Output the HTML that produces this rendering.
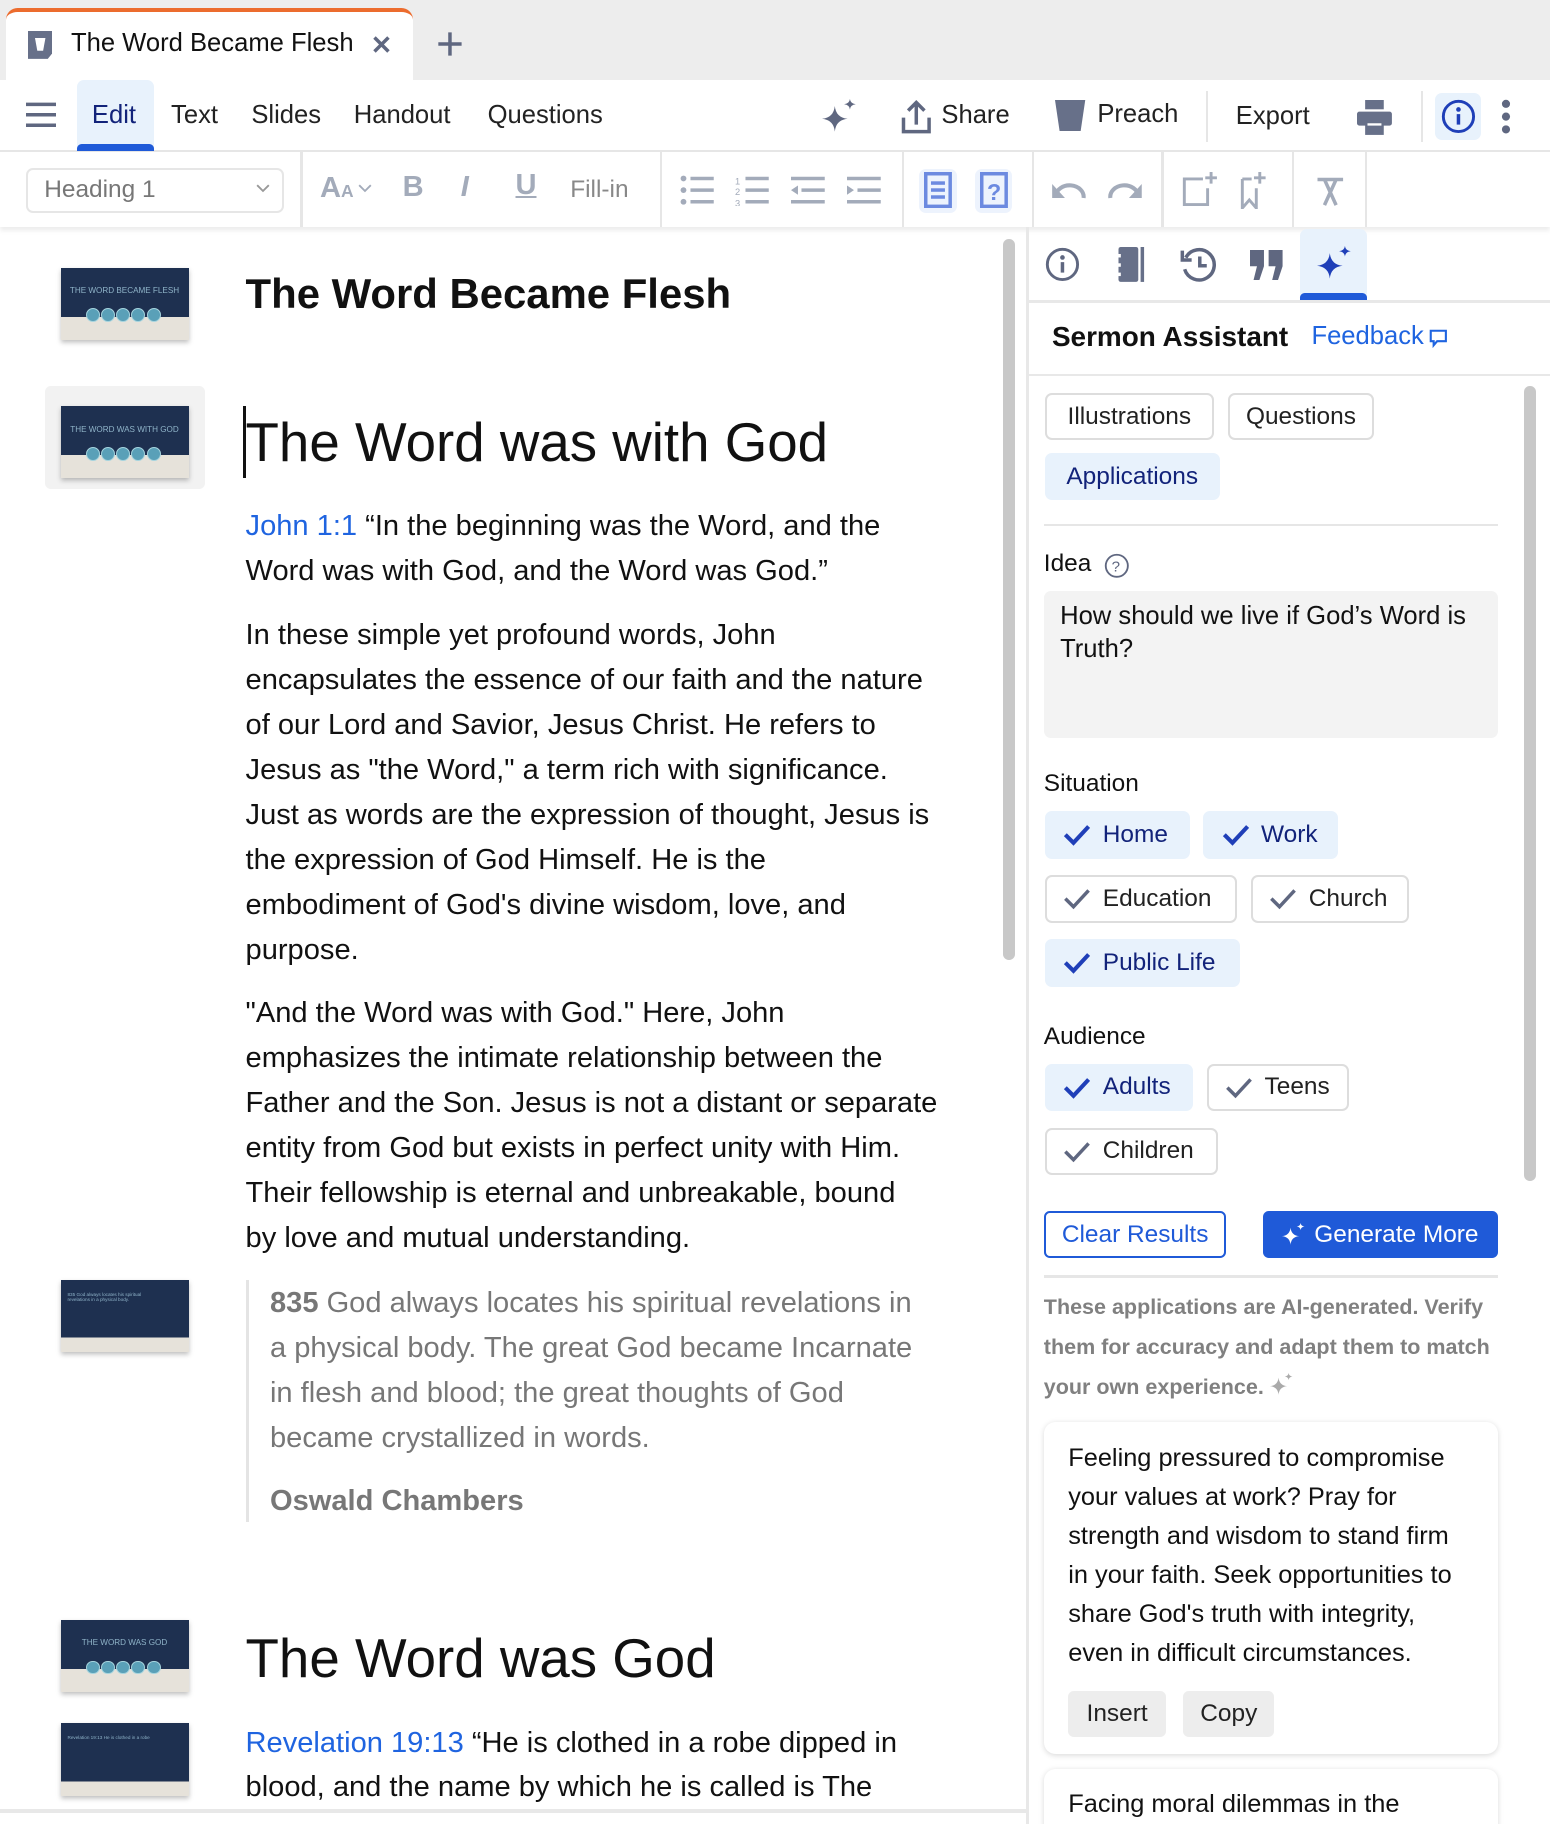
<!DOCTYPE html>
<html><head><meta charset="utf-8"><style>
*{box-sizing:border-box;margin:0;padding:0}
html,body{width:1550px;height:1824px;overflow:hidden;background:#fff}
#root{zoom:1.16366;width:1332px;height:1568px;position:relative;font-family:"Liberation Sans",sans-serif;color:#111;overflow:hidden}
.a{position:absolute;white-space:nowrap}
.ic{position:absolute}
.chip{position:absolute;border:2px solid #ddd;border-radius:6px;font-size:21px;color:#222;display:flex;align-items:center;justify-content:center;background:#fff}
.chip.on{background:#e8f2fc;border-color:#e8f2fc;color:#12237a}
.chk{position:absolute;border:2px solid #ddd;border-radius:6px;font-size:21px;color:#222;display:flex;align-items:center;padding-left:14px;gap:10px;background:#fff}
.chk.on{background:#e8f2fc;border-color:#e8f2fc;color:#12237a}
.chk svg{width:24px;height:20px}
.sep{position:absolute;width:2px;background:#e6e6e6}
.p{position:absolute;left:211px;font-size:25px;line-height:38.6px;white-space:nowrap;color:#111}
.thumb{position:absolute;width:110px;height:62px;background:linear-gradient(#1e3050 0 68%,#e6e2da 68%);box-shadow:0 2px 4px rgba(0,0,0,.25)}
.thumb span{position:absolute;left:0;right:0;top:16px;text-align:center;font-size:7px;color:#8fb3c8}
.thumb i{position:absolute;top:35px;width:12px;height:12px;border-radius:50%;background:#5aa0b8;border:1px solid #a6d4de}
</style></head><body><div id="root">
<div class="a" style="left:0;top:0;width:1332px;height:69px;background:#ededed"></div>
<div class="a" style="left:5px;top:7px;width:350px;height:63px;background:#fff;border-radius:10px 10px 0 0;border-top:4px solid #ec6c2e"></div>
<svg class="ic" style="left:24px;top:27px" width="21" height="24" viewBox="0 0 21 24"><path d="M0 0H21V19L17 24H0Z" fill="#677089"/><path d="M6 6H15L13 17H8Z" fill="#fff"/></svg>
<div class="a" style="left:61px;top:25px;font-size:22px;color:#111">The Word Became Flesh</div>
<svg class="ic" style="left:319px;top:29px" width="18" height="18"><path d="M3 3L15 15M15 3L3 15" stroke="#5f6780" stroke-width="3"/></svg>
<svg class="ic" style="left:375px;top:26px" width="24" height="24"><path d="M12 2V22M2 12H22" stroke="#5f6780" stroke-width="3"/></svg>
<div class="a" style="left:0;top:69px;width:1332px;height:62px;background:#fff;border-bottom:2px solid #e6e6e6"></div>
<svg class="ic" style="left:22px;top:88px" width="26" height="22"><path d="M0 2H26M0 11H26M0 20H26" stroke="#5f6780" stroke-width="3"/></svg>
<div class="a" style="left:66px;top:69px;width:66px;height:61px;background:#e8f2fc;border-radius:6px 6px 0 0"></div>
<div class="a" style="left:66px;top:124px;width:66px;height:6px;background:#1f5ad8;border-radius:4px 4px 0 0"></div>
<div class="a" style="left:79px;top:87px;font-size:22px;color:#12237a">Edit</div>
<div class="a" style="left:147px;top:87px;font-size:22px;color:#222">Text</div>
<div class="a" style="left:216px;top:87px;font-size:22px;color:#222">Slides</div>
<div class="a" style="left:304px;top:87px;font-size:22px;color:#222">Handout</div>
<div class="a" style="left:419px;top:87px;font-size:22px;color:#222">Questions</div>
<svg class="ic" style="left:706px;top:85px" width="30" height="30" viewBox="0 0 30 30"><path d="M11 6Q12 16 22 17Q12 18 11 28Q10 18 0 17Q10 16 11 6Z" fill="#5f6780"/><path d="M24 0Q24.5 4 29 4.5Q24.5 5 24 9Q23.5 5 19 4.5Q23.5 4 24 0Z" fill="#5f6780"/></svg>
<svg class="ic" style="left:773px;top:85px" width="28" height="30"><path d="M14 22V3M7 10L14 3L21 10M3 16V28H25V16" stroke="#5f6780" stroke-width="3" fill="none"/></svg>
<div class="a" style="left:809px;top:87px;font-size:22px;color:#222">Share</div>
<svg class="ic" style="left:907px;top:86px" width="26" height="27"><path d="M0 0H26L22 27H4Z" fill="#677089"/></svg>
<div class="a" style="left:943px;top:86px;font-size:22px;color:#222">Preach</div>
<div class="sep" style="left:1036px;top:78px;height:44px"></div>
<div class="a" style="left:1062px;top:88px;font-size:22px;color:#222">Export</div>
<svg class="ic" style="left:1166px;top:86px" width="30" height="30"><rect x="7" y="0" width="16" height="8" fill="#677089"/><rect x="0" y="10" width="30" height="12" rx="2" fill="#677089"/><rect x="7" y="19" width="16" height="11" fill="#677089"/><rect x="9" y="20" width="12" height="2" fill="#fff"/></svg>
<div class="sep" style="left:1221px;top:78px;height:44px"></div>
<div class="a" style="left:1233px;top:80px;width:40px;height:40px;background:#e8f2fc;border-radius:6px"></div>
<svg class="ic" style="left:1238px;top:85px" width="30" height="30"><circle cx="15" cy="15" r="13" stroke="#1f3fb8" stroke-width="2.5" fill="none"/><circle cx="15" cy="9" r="2" fill="#1f3fb8"/><path d="M15 13V22" stroke="#1f3fb8" stroke-width="3"/></svg>
<svg class="ic" style="left:1288px;top:84px" width="12" height="32"><circle cx="6" cy="5" r="3.5" fill="#5f6780"/><circle cx="6" cy="16" r="3.5" fill="#5f6780"/><circle cx="6" cy="27" r="3.5" fill="#5f6780"/></svg>
<div class="a" style="left:0;top:131px;width:1332px;height:64px;background:#fff;box-shadow:0 3px 4px rgba(0,0,0,.08)"></div>
<div class="a" style="left:22px;top:144px;width:222px;height:39px;border:2px solid #e6e6e6;border-radius:6px"></div>
<div class="a" style="left:38px;top:151px;font-size:21px;color:#777">Heading 1</div>
<svg class="ic" style="left:220px;top:158px" width="12" height="8"><path d="M1 1L6 6L11 1" stroke="#999" stroke-width="1.6" fill="none"/></svg>
<div class="sep" style="left:258px;top:131px;height:64px"></div>
<div class="sep" style="left:567px;top:131px;height:64px"></div>
<div class="sep" style="left:775px;top:131px;height:64px"></div>
<div class="sep" style="left:887px;top:131px;height:64px"></div>
<div class="sep" style="left:998px;top:131px;height:64px"></div>
<div class="sep" style="left:1110px;top:131px;height:64px"></div>
<div class="sep" style="left:1173px;top:131px;height:64px"></div>
<div class="a" style="left:275px;top:148px;font-size:25px;font-weight:bold;color:#a3abba">A<span style="font-size:15px">A</span></div>
<svg class="ic" style="left:308px;top:158px" width="12" height="8"><path d="M1 1L6 6L11 1" stroke="#a3abba" stroke-width="1.6" fill="none"/></svg>
<div class="a" style="left:346px;top:147px;font-size:25px;font-weight:bold;color:#a3abba">B</div>
<div class="a" style="left:396px;top:147px;font-size:25px;font-weight:bold;font-style:italic;color:#a3abba">I</div>
<div class="a" style="left:443px;top:145px;font-size:25px;font-weight:bold;color:#a3abba;text-decoration:underline">U</div>
<div class="a" style="left:490px;top:151px;font-size:21px;color:#888">Fill-in</div>
<svg class="ic" style="left:584px;top:150px" width="30" height="27"><g fill="#a3abba"><circle cx="3" cy="3" r="2.5"/><circle cx="3" cy="13" r="2.5"/><circle cx="3" cy="23" r="2.5"/><rect x="9" y="1.5" width="20" height="3"/><rect x="9" y="11.5" width="20" height="3"/><rect x="9" y="21.5" width="20" height="3"/></g></svg>
<svg class="ic" style="left:632px;top:150px" width="30" height="27"><g fill="#a3abba"><rect x="9" y="1.5" width="20" height="3"/><rect x="9" y="11.5" width="20" height="3"/><rect x="9" y="21.5" width="20" height="3"/><text x="0" y="8" font-size="8">1</text><text x="0" y="17" font-size="8">2</text><text x="0" y="27" font-size="8">3</text></g></svg>
<svg class="ic" style="left:680px;top:150px" width="30" height="27"><g fill="#a3abba"><rect x="0" y="1.5" width="29" height="3"/><rect x="9" y="11.5" width="20" height="3"/><rect x="0" y="21.5" width="29" height="3"/><path d="M0 13L6 9V17Z"/></g></svg>
<svg class="ic" style="left:728px;top:150px" width="30" height="27"><g fill="#a3abba"><rect x="0" y="1.5" width="29" height="3"/><rect x="9" y="11.5" width="20" height="3"/><rect x="0" y="21.5" width="29" height="3"/><path d="M6 13L0 9V17Z"/></g></svg>
<div class="a" style="left:790px;top:145px;width:32px;height:38px;background:#edf3fd;border-radius:6px"></div>
<svg class="ic" style="left:794px;top:148px" width="24" height="31"><rect x="1.5" y="1.5" width="21" height="28" stroke="#6c8ae0" stroke-width="3" fill="none"/><g fill="#6c8ae0"><rect x="6" y="8" width="12" height="3"/><rect x="6" y="14" width="12" height="3"/><rect x="6" y="20" width="12" height="3"/></g></svg>
<div class="a" style="left:838px;top:145px;width:32px;height:38px;background:#edf3fd;border-radius:6px"></div>
<svg class="ic" style="left:842px;top:148px" width="24" height="31"><rect x="1.5" y="1.5" width="21" height="28" stroke="#6c8ae0" stroke-width="3" fill="none"/><text x="6" y="24" font-size="20" font-weight="bold" fill="#6c8ae0" font-family="Liberation Sans">?</text></svg>
<svg class="ic" style="left:903px;top:152px" width="30" height="22"><path d="M4 16A11 9 0 0 1 28 18" stroke="#a3abba" stroke-width="3.5" fill="none"/><path d="M1 6V18H12Z" fill="#a3abba"/></svg>
<svg class="ic" style="left:952px;top:152px" width="30" height="22"><path d="M26 16A11 9 0 0 0 2 18" stroke="#a3abba" stroke-width="3.5" fill="none"/><path d="M29 6V18H18Z" fill="#a3abba"/></svg>
<svg class="ic" style="left:1016px;top:148px" width="30" height="30"><path d="M18 6H2V28H22V14" stroke="#a3abba" stroke-width="2.5" fill="none"/><path d="M25 0V10M20 5H30" stroke="#a3abba" stroke-width="2.5"/></svg>
<svg class="ic" style="left:1066px;top:148px" width="30" height="32"><path d="M2 6V31L8 24L14 31V14" stroke="#a3abba" stroke-width="2.5" fill="none"/><path d="M17 0V10M12 5H22" stroke="#a3abba" stroke-width="2.5"/><path d="M2 6H10" stroke="#a3abba" stroke-width="2.5"/></svg>
<svg class="ic" style="left:1129px;top:151px" width="26" height="26"><path d="M3 3H25M9 3L19 25M19 3L9 25" stroke="#a3abba" stroke-width="3" fill="none"/></svg>
<div class="a" style="left:862px;top:205px;width:10px;height:620px;background:#c8c8c8;border-radius:5px"></div>
<div class="a" style="left:882px;top:195px;width:2px;height:1373px;background:#e8e8e8"></div>
<div class="a" style="left:0;top:1555px;width:882px;height:3px;background:#e8e8e8"></div>
<div class="thumb" style="left:52px;top:230px"><span>THE WORD BECAME FLESH</span><i style="left:22px"></i><i style="left:35px"></i><i style="left:48px"></i><i style="left:61px"></i><i style="left:74px"></i></div>
<div class="a" style="left:39px;top:332px;width:137px;height:88px;background:#f2f2f2;border-radius:5px"></div>
<div class="thumb" style="left:52px;top:349px"><span>THE WORD WAS WITH GOD</span><i style="left:22px"></i><i style="left:35px"></i><i style="left:48px"></i><i style="left:61px"></i><i style="left:74px"></i></div>
<div class="thumb" style="left:52px;top:1100px;background:linear-gradient(#1e3050 0 80%,#e6e2da 80%)"><span style="top:10px;font-size:4px;text-align:left;padding-left:6px">835 God always locates his spiritual<br>revelations in a physical body.</span></div>
<div class="thumb" style="left:52px;top:1392px"><span>THE WORD WAS GOD</span><i style="left:22px"></i><i style="left:35px"></i><i style="left:48px"></i><i style="left:61px"></i><i style="left:74px"></i></div>
<div class="thumb" style="left:52px;top:1481px;background:linear-gradient(#1e3050 0 80%,#e6e2da 80%)"><span style="top:10px;font-size:4px;text-align:left;padding-left:6px">Revelation 19:13 He is clothed in a robe</span></div>
<div class="a" style="left:211px;top:232px;font-size:36px;font-weight:bold;color:#111">The Word Became Flesh</div>
<div class="a" style="left:209px;top:349px;width:2px;height:62px;background:#111"></div>
<div class="a" style="left:211px;top:352px;font-size:47px;color:#111">The Word was with God</div>
<div class="p" style="top:433px"><span style="color:#1f64e0">John 1:1</span> “In the beginning was the Word, and the<br>Word was with God, and the Word was God.”</div>
<div class="p" style="top:527px">In these simple yet profound words, John<br>encapsulates the essence of our faith and the nature<br>of our Lord and Savior, Jesus Christ. He refers to<br>Jesus as "the Word," a term rich with significance.<br>Just as words are the expression of thought, Jesus is<br>the expression of God Himself. He is the<br>embodiment of God's divine wisdom, love, and<br>purpose.</div>
<div class="p" style="top:852px">"And the Word was with God." Here, John<br>emphasizes the intimate relationship between the<br>Father and the Son. Jesus is not a distant or separate<br>entity from God but exists in perfect unity with Him.<br>Their fellowship is eternal and unbreakable, bound<br>by love and mutual understanding.</div>
<div class="a" style="left:211px;top:1100px;width:3px;height:208px;background:#e4e4e4"></div>
<div class="p" style="left:232px;top:1101px;color:#777;font-size:25px"><b>835</b> God always locates his spiritual revelations in<br>a physical body. The great God became Incarnate<br>in flesh and blood; the great thoughts of God<br>became crystallized in words.</div>
<div class="a" style="left:232px;top:1276px;font-size:25px;font-weight:bold;color:#777">Oswald Chambers</div>
<div class="a" style="left:211px;top:1397px;font-size:47px;color:#111">The Word was God</div>
<div class="p" style="top:1479px;line-height:38px"><span style="color:#1f64e0">Revelation 19:13</span> “He is clothed in a robe dipped in<br>blood, and the name by which he is called is The</div>
<svg class="ic" style="left:898px;top:212px" width="30" height="30"><circle cx="15" cy="15" r="13" stroke="#5f6780" stroke-width="2.5" fill="none"/><circle cx="15" cy="9" r="2" fill="#5f6780"/><path d="M15 13V22" stroke="#5f6780" stroke-width="3"/></svg>
<svg class="ic" style="left:958px;top:212px" width="26" height="30"><rect x="3" y="0" width="17" height="30" rx="2" fill="#677089"/><rect x="22" y="0" width="3" height="30" fill="#677089"/><g fill="#fff"><rect x="0" y="6" width="5" height="3"/><rect x="0" y="14" width="5" height="3"/><rect x="0" y="22" width="5" height="3"/></g></svg>
<svg class="ic" style="left:1014px;top:211px" width="32" height="32"><path d="M5 10A13 13 0 1 1 4 20" stroke="#5f6780" stroke-width="3" fill="none"/><path d="M2 4V12H10" stroke="#5f6780" stroke-width="3" fill="none"/><path d="M17 9V17H23" stroke="#5f6780" stroke-width="3" fill="none"/></svg>
<svg class="ic" style="left:1074px;top:215px" width="30" height="26"><path d="M0 0H12V14L8 26H3L6 14H0Z M16 0H28V14L24 26H19L22 14H16Z" fill="#5f6780"/></svg>
<div class="a" style="left:1117px;top:197px;width:58px;height:61px;background:#e8f2fc;border-radius:6px 6px 0 0"></div>
<div class="a" style="left:1117px;top:252px;width:58px;height:6px;background:#1f5ad8;border-radius:4px 4px 0 0"></div>
<svg class="ic" style="left:1132px;top:211px" width="30" height="30" viewBox="0 0 30 30"><path d="M11 6Q12 16 22 17Q12 18 11 28Q10 18 0 17Q10 16 11 6Z" fill="#1f3fb8"/><path d="M24 0Q24.5 4 29 4.5Q24.5 5 24 9Q23.5 5 19 4.5Q23.5 4 24 0Z" fill="#1f3fb8"/></svg>
<div class="a" style="left:884px;top:258px;width:448px;height:2px;background:#e8e8e8"></div>
<div class="a" style="left:904px;top:276px;font-size:24px;font-weight:bold;color:#111">Sermon Assistant</div>
<div class="a" style="left:1127px;top:277px;font-size:22px;color:#1f64e0">Feedback</div>
<svg class="ic" style="left:1228px;top:283px" width="16" height="16"><path d="M1.5 1.5H14.5V10.5H7L4 14V10.5H1.5Z" stroke="#1f64e0" stroke-width="1.8" fill="none"/></svg>
<div class="a" style="left:884px;top:321px;width:448px;height:2px;background:#e8e8e8"></div>
<div class="a" style="left:1310px;top:332px;width:10px;height:683px;background:#c8c8c8;border-radius:5px"></div>
<div class="chip" style="left:898px;top:338px;width:145px;height:40px">Illustrations</div>
<div class="chip" style="left:1055px;top:338px;width:126px;height:40px">Questions</div>
<div class="chip on" style="left:898px;top:389px;width:150px;height:41px">Applications</div>
<div class="a" style="left:897px;top:450px;width:390px;height:2px;background:#e6e6e6"></div>
<div class="a" style="left:897px;top:473px;font-size:21px;color:#111">Idea</div>
<svg class="ic" style="left:949px;top:475px" width="22" height="22"><circle cx="11" cy="11" r="9.5" stroke="#5f6780" stroke-width="1.6" fill="none"/><text x="6.5" y="16" font-size="13" fill="#5f6780" font-family="Liberation Sans">?</text></svg>
<div class="a" style="left:897px;top:508px;width:390px;height:126px;background:#f3f3f3;border-radius:6px"></div>
<div class="a" style="left:911px;top:516px;font-size:22px;line-height:28px;color:#111">How should we live if God’s Word is<br>Truth?</div>
<div class="a" style="left:897px;top:662px;font-size:21px;color:#111">Situation</div>
<svg width="0" height="0" style="position:absolute"><defs><path id="ck" d="M2 10L9 17L22 3"/></defs></svg>
<div class="chk on" style="left:898px;top:697px;width:125px;height:41px"><svg viewBox="0 0 24 20"><use href="#ck" stroke="#1f3fb8" stroke-width="3.5" fill="none"/></svg>Home</div>
<div class="chk on" style="left:1034px;top:697px;width:116px;height:41px"><svg viewBox="0 0 24 20"><use href="#ck" stroke="#1f3fb8" stroke-width="3.5" fill="none"/></svg>Work</div>
<div class="chk" style="left:898px;top:752px;width:165px;height:41px"><svg viewBox="0 0 24 20"><use href="#ck" stroke="#5f6780" stroke-width="3" fill="none"/></svg>Education</div>
<div class="chk" style="left:1075px;top:752px;width:136px;height:41px"><svg viewBox="0 0 24 20"><use href="#ck" stroke="#5f6780" stroke-width="3" fill="none"/></svg>Church</div>
<div class="chk on" style="left:898px;top:807px;width:168px;height:41px"><svg viewBox="0 0 24 20"><use href="#ck" stroke="#1f3fb8" stroke-width="3.5" fill="none"/></svg>Public Life</div>
<div class="a" style="left:897px;top:879px;font-size:21px;color:#111">Audience</div>
<div class="chk on" style="left:898px;top:914px;width:127px;height:41px"><svg viewBox="0 0 24 20"><use href="#ck" stroke="#1f3fb8" stroke-width="3.5" fill="none"/></svg>Adults</div>
<div class="chk" style="left:1037px;top:914px;width:122px;height:41px"><svg viewBox="0 0 24 20"><use href="#ck" stroke="#5f6780" stroke-width="3" fill="none"/></svg>Teens</div>
<div class="chk" style="left:898px;top:969px;width:149px;height:41px"><svg viewBox="0 0 24 20"><use href="#ck" stroke="#5f6780" stroke-width="3" fill="none"/></svg>Children</div>
<div class="a" style="left:897px;top:1041px;width:157px;height:40px;border:2px solid #1f5ad8;border-radius:5px;color:#1f5ad8;font-size:21px;display:flex;align-items:center;justify-content:center">Clear Results</div>
<div class="a" style="left:1085px;top:1041px;width:202px;height:40px;background:#1f5ad8;border-radius:5px;color:#fff;font-size:21px;display:flex;align-items:center;justify-content:center;gap:8px"><svg width="20" height="20" viewBox="0 0 30 30"><path d="M11 6Q12 16 22 17Q12 18 11 28Q10 18 0 17Q10 16 11 6Z" fill="#fff"/><path d="M24 0Q24.5 4 29 4.5Q24.5 5 24 9Q23.5 5 19 4.5Q23.5 4 24 0Z" fill="#fff"/></svg>Generate More</div>
<div class="a" style="left:897px;top:1096px;width:390px;height:2px;background:#e6e6e6"></div>
<div class="a" style="left:897px;top:1106px;font-size:18.5px;line-height:34.5px;font-weight:bold;color:#808080">These applications are AI-generated. Verify<br>them for accuracy and adapt them to match<br>your own experience. <svg width="20" height="20" viewBox="0 0 30 30" style="vertical-align:-2px"><path d="M11 6Q12 16 22 17Q12 18 11 28Q10 18 0 17Q10 16 11 6Z" fill="#aaa"/><path d="M24 0Q24.5 4 29 4.5Q24.5 5 24 9Q23.5 5 19 4.5Q23.5 4 24 0Z" fill="#aaa"/></svg></div>
<div class="a" style="left:897px;top:1222px;width:390px;height:285px;background:#fff;border-radius:10px;box-shadow:0 1px 5px rgba(0,0,0,.15)"></div>
<div class="a" style="left:918px;top:1237px;font-size:21.8px;line-height:33.4px;color:#111">Feeling pressured to compromise<br>your values at work? Pray for<br>strength and wisdom to stand firm<br>in your faith. Seek opportunities to<br>share God's truth with integrity,<br>even in difficult circumstances.</div>
<div class="a" style="left:918px;top:1453px;width:84px;height:40px;background:#ededed;border-radius:5px;font-size:21px;display:flex;align-items:center;justify-content:center;color:#222">Insert</div>
<div class="a" style="left:1017px;top:1453px;width:78px;height:40px;background:#ededed;border-radius:5px;font-size:21px;display:flex;align-items:center;justify-content:center;color:#222">Copy</div>
<div class="a" style="left:897px;top:1520px;width:390px;height:80px;background:#fff;border-radius:10px;box-shadow:0 1px 5px rgba(0,0,0,.15)"></div>
<div class="a" style="left:918px;top:1538px;font-size:21.8px;color:#111">Facing moral dilemmas in the</div>
</div></body></html>
